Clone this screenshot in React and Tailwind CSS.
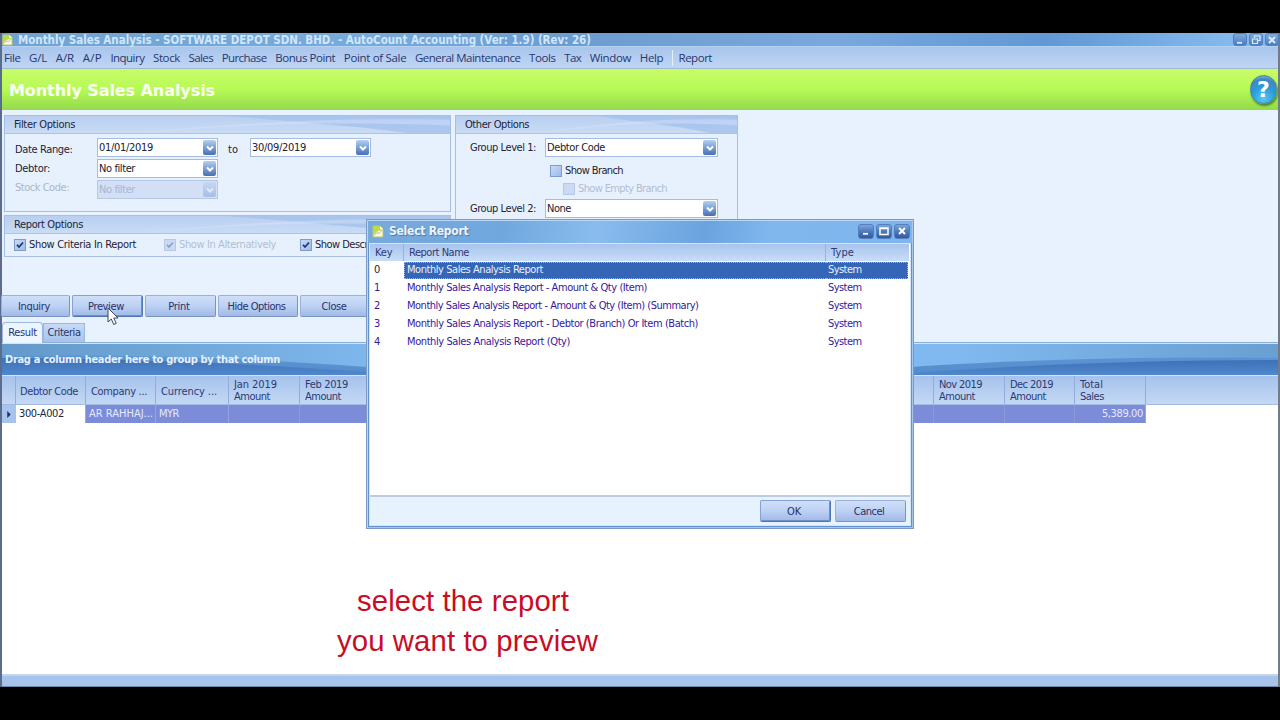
import { useLayoutEffect, useRef, useState } from "react";

// Single line of text whose tracking is adjusted so that it spans `w` pixels.
function Fit({ w, className = "", children }) {
  const ref = useRef(null);
  const [spacing, setSpacing] = useState(0);
  useLayoutEffect(() => {
    const natural = ref.current.getBoundingClientRect().width;
    setSpacing((w - natural) / String(children).length);
  }, []);
  return (
    <span className={`block shrink-0 whitespace-pre ${className}`}>
      <span ref={ref} className="inline-block align-top" style={{ letterSpacing: `${spacing}px` }}>
        {children}
      </span>
    </span>
  );
}

function DocIcon({ className }) {
  return (
    <svg viewBox="0 0 12 13" className={className}>
      <path d="M1 1h7l3 3v8H1z" fill="#f6f8ea" stroke="#b4c766" strokeWidth="1" />
      <path d="M1 1h7v3l3 1-5 1-5 4z" fill="#b8dc4e" />
      <path d="M2 10.500l3-3 2 1 3-3" stroke="#dba88b" strokeWidth="1" fill="none" />
      <path d="M8 1v3h3" fill="#fff" />
    </svg>
  );
}

function WinButton({ kind, dim }) {
  return (
    <span
      className={`flex items-center justify-center rounded-[3px] border ${
        dim
          ? "h-[13px] w-[14px] border-[#5280be] bg-linear-to-b from-[#7fabdf] to-[#4c7cc2]"
          : "h-[15px] w-[16px] border-[#5380bd] bg-linear-to-b from-[#7ba5dc] via-[#4d79bd] to-[#3159a1]"
      }`}
    >
      <svg viewBox="0 0 12 12" className="h-[12px] w-[12px] shrink-0" fill="none" stroke={dim ? "#dceafa" : "#fff"} strokeWidth="1.5">
        {kind === "min" && <path d="M3 8.800h5" strokeWidth="1.8" />}
        {kind === "max" && <path d="M2 3h8v6.500H2zM2 3.600h8" />}
        {kind === "restore" && <path d="M4.500 4V2h5.500v4.500H8M2.500 5h5v4.500h-5z" strokeWidth="1.2" />}
        {kind === "close" && <path d="M3 3l6 6M9 3l-6 6" strokeWidth="2" />}
      </svg>
    </span>
  );
}

const menu = [
  ["File", 16.500], ["G/L", 18], ["A/R", 18.500], ["A/P", 19], ["Inquiry", 34], ["Stock", 27], ["Sales", 24.500],
  ["Purchase", 45], ["Bonus Point", 60], ["Point of Sale", 62.500], ["General Maintenance", 105.500],
  ["Tools", 26.500], ["Tax", 17], ["Window", 41.500], ["Help", 23.500],
];

function GroupBox({ title, w, className, children }) {
  return (
    <section className={`flex shrink-0 flex-col border border-[#a9bfe2] bg-[#e7f1fd] ${className}`}>
      <header className="relative flex h-[18px] shrink-0 items-center border-b border-[#adc4e8] bg-linear-to-b from-[#b9cff0] to-[#c9dcf6] pl-[9px]">
        <svg viewBox="0 0 100 18" preserveAspectRatio="none" className="absolute inset-0 h-full w-full">
          <path d="M50 0H100V18H90C82 12 72 9 50 0z" fill="#a5c2ec" opacity=".8" />
          <path d="M30 18C55 8 75 6 100 10V4C75 2 55 6 30 18z" fill="#d6e5fa" opacity=".45" />
        </svg>
        <Fit w={w} className="relative pt-px">{title}</Fit>
      </header>
      {children}
    </section>
  );
}

function Combo({ text, w, className, disabled }) {
  return (
    <div
      className={`flex h-[19px] shrink-0 items-center justify-between border pr-px pl-px ${
        disabled ? "border-[#b5c8e7] bg-[#d2dff5] text-[#a4b6d7]" : "border-[#a5bce0] bg-white text-[#202030]"
      } ${className}`}
    >
      <Fit w={w} className="pt-px">{text}</Fit>
      <span
        className={`flex h-[15px] w-[13px] items-center justify-center rounded-[2px] ${
          disabled ? "bg-linear-to-b from-[#c8d8f2] to-[#a7bde4]" : "bg-linear-to-b from-[#b6cff2] via-[#7b9fd5] to-[#486fb2]"
        }`}
      >
        <svg viewBox="0 0 10 10" className="h-[10px] w-[10px]" fill="none" stroke={disabled ? "#dfe9f9" : "#fff"} strokeWidth="2">
          <path d="M2 3.500l3 3 3-3" />
        </svg>
      </span>
    </div>
  );
}

function Check({ label, w, checked, disabled, className = "" }) {
  return (
    <span className={`flex shrink-0 items-center gap-[3px] ${disabled ? "text-[#b0bdd6]" : "text-[#1f2333]"} ${className}`}>
      <span
        className={`flex h-[12px] w-[12px] items-center justify-center border ${
          disabled ? "border-[#b7c8e6] bg-[#cbd9f2]" : "border-[#7e9ccd] bg-linear-to-br from-[#c8daf6] to-[#9fbbe8]"
        }`}
      >
        {checked && (
          <svg viewBox="0 0 10 10" className="h-[10px] w-[10px]" fill="none" stroke={disabled ? "#8b9fd0" : "#20326f"} strokeWidth="1.7">
            <path d="M2 4.800l2 2.200 4-4.500" />
          </svg>
        )}
      </span>
      <Fit w={w}>{label}</Fit>
    </span>
  );
}

function PushButton({ label, w, className, strong }) {
  return (
    <span
      className={`flex h-[22px] shrink-0 items-center justify-center rounded-[2px] border bg-linear-to-b from-[#cfdff9] via-[#bdd1f3] to-[#a0b9e6] pt-[2px] pr-[3px] text-[#28316c] ${
        strong ? "border-[#86a2d2] border-r-[#4f75b6] border-b-[#4f75b6] shadow-[inset_-1px_-1px_0_#6d8fca]" : "border-[#9ab0d8] border-r-[#7993c2] border-b-[#7993c2]"
      } ${className}`}
    >
      <Fit w={w}>{label}</Fit>
    </span>
  );
}

const months = ["Jan", "Feb", "Mar", "Apr", "May", "Jun", "Jul", "Aug", "Sep", "Oct", "Nov", "Dec"];
const columns = "grid grid-cols-[14px_70px_70px_73px_71px_repeat(9,70.44px)_71px_70px_71px]";

const reports = [
  ["Monthly Sales Analysis Report", 136],
  ["Monthly Sales Analysis Report - Amount & Qty (Item)", 240],
  ["Monthly Sales Analysis Report - Amount & Qty (Item) (Summary)", 291.500],
  ["Monthly Sales Analysis Report - Debtor (Branch) Or Item (Batch)", 291],
  ["Monthly Sales Analysis Report (Qty)", 163],
];

function SelectReport() {
  return (
    <div className="absolute top-[219px] left-[366px] flex h-[310px] w-[548px] flex-col border border-[#7e99c2] bg-[#5f92cf] px-[2px] pb-[2px] shadow-[inset_1px_1px_0_#b9d6f5,inset_-1px_-1px_0_#a9c6ea]">
      <div className="mx-[-1px] mt-px flex h-[22px] shrink-0 items-center bg-[linear-gradient(100deg,#78a9da_0%,#70a8de_25%,#8abcee_42%,#6aa3df_62%,#80b8ee_74%,#7eb5ec_100%)] pr-[2px] pb-[2px] pl-[4px]">
        <DocIcon className="mr-[5px] h-[13px] w-[12px]" />
        <Fit w={79.500} className="text-[12px] font-bold text-[#eaf4ff] [text-shadow:1px_1px_1px_#55759f]">Select Report</Fit>
        <span className="ml-auto flex gap-[2px]">
          <WinButton kind="min" />
          <WinButton kind="max" />
          <WinButton kind="close" />
        </span>
      </div>
      <div className="flex min-h-0 flex-1 flex-col border border-[#d4e5f9] bg-white">
        <div className="mr-px grid h-[17px] shrink-0 grid-cols-[34px_422px_1fr] items-stretch bg-linear-to-b from-[#a9c4ec] to-[#c7dcf7] text-[#2c3a77]">
          <span className="flex items-center border-r border-[#98b2dc] pt-px pl-[5px]"><Fit w={17.500}>Key</Fit></span>
          <span className="flex items-center border-r border-[#98b2dc] pt-px pl-[5px]"><Fit w={60}>Report Name</Fit></span>
          <span className="flex items-center pt-px pl-[5px]"><Fit w={23}>Type</Fit></span>
        </div>
        {reports.map(([name, w], i) => (
          <div key={name} className={`mr-[2px] grid h-[18px] shrink-0 grid-cols-[34px_422px_1fr] items-center ${i === 0 ? "text-[#e8f0ff]" : "text-[#36189c]"}`}>
            <span className={`flex h-full items-center pb-px pl-[4px] ${i === 0 ? "text-[#252536]" : ""}`}>{i}</span>
            <span className={`flex items-center pb-px ${i === 0 ? "h-[17px] border-y border-l border-dotted border-[#9cb6e4] bg-[#3565b7] pl-[2px]" : "h-full pl-[3px]"}`}>
              <Fit w={w}>{name}</Fit>
            </span>
            <span className={`flex items-center pb-px pl-[2px] ${i === 0 ? "h-[17px] border-y border-r border-dotted border-[#9cb6e4] bg-[#3565b7]" : "h-full"}`}>
              <Fit w={33.500}>System</Fit>
            </span>
          </div>
        ))}
        <div className="mt-auto flex h-[30px] shrink-0 items-center justify-end gap-[4px] border-t-2 border-[#bccbdf] bg-[#e6f2fe] pr-[4px]">
          <PushButton label="OK" w={14} strong className="w-[71px]" />
          <PushButton label="Cancel" w={30.500} className="w-[71px]" />
        </div>
      </div>
    </div>
  );
}

export default function App() {
  return (
    <div className="relative flex h-[720px] w-[1280px] flex-col overflow-hidden bg-black py-[33px] font-['DejaVu_Sans_Condensed','DejaVu_Sans',sans-serif] text-[11px] leading-[12px] [font-stretch:condensed]">
      <div className="flex h-[654px] flex-col border-r-2 border-l-2 border-r-[#727b8a] border-l-[#5b6c8d] bg-white">
        <div className="flex h-[14px] shrink-0 items-center border-b border-[#b6d4f2] bg-[linear-gradient(90deg,#70a2d2_0%,#78aadb_28%,#6c9cd0_45%,#78a8dd_65%,#6298d4_82%,#83b9ec_96%)]">
          <DocIcon className="mr-[5px] h-[12px] w-[11px]" />
          <Fit w={573} className="text-[11.500px] font-bold text-[#cfe6fd]">Monthly Sales Analysis - SOFTWARE DEPOT SDN. BHD. - AutoCount Accounting (Ver: 1.9) (Rev: 26)</Fit>
          <span className="mr-[-1px] ml-auto flex gap-[2px]">
            <WinButton kind="min" dim />
            <WinButton kind="restore" dim />
            <WinButton kind="close" dim />
          </span>
        </div>
        <nav className="flex h-[22px] shrink-0 items-center gap-[8.600px] border-b border-[#9db9ce] bg-linear-to-b from-[#a9c5ec] to-[#bfd5f4] pl-[2px] font-['Open_Sans','Noto_Sans',sans-serif] text-[11.500px] text-[#28376f] [font-stretch:normal]">
          {menu.map(([label, w]) => (
            <Fit key={label} w={w}>{label}</Fit>
          ))}
          <span className="mr-[-3px] h-[16px] w-px bg-[#e4effc]" />
          <Fit w={33.500}>Report</Fit>
        </nav>
        <header className="flex h-[41px] shrink-0 items-center justify-between bg-linear-to-b from-[#c9fc68] via-[#b6fa56] to-[#94d94c] pl-[7px]">
          <Fit w={206} className="pt-[2px] font-['DejaVu_Sans',sans-serif] text-[16px] leading-[20px] font-bold text-[#fbfff0] [font-stretch:normal]">Monthly Sales Analysis</Fit>
          <span className="mr-px flex h-[29px] w-[27px] items-center justify-center rounded-full border border-[#4382a8] bg-[radial-gradient(circle_at_50%_85%,#55c9f2_0%,#2b9bdc_45%,#4287bf_75%,#a9d3ee_100%)] font-['DejaVu_Sans',sans-serif] text-[22px] leading-none font-bold text-white shadow-[1px_2px_2px_#4d8a2f] [font-stretch:normal]">?</span>
        </header>

        <div className="flex h-[207px] shrink-0 gap-[4px] bg-[#e7f2fe] pt-[5px] pl-[2px] text-[#20243a]">
          <div className="flex w-[447px] shrink-0 flex-col">
            <GroupBox title="Filter Options" w={61} className="mb-[3px] h-[97px]">
              <div className="grid grid-cols-[82px_122px_31px_121px] gap-y-[2px] pt-[4px] pl-[10px]">
                <Fit w={57.500} className="pt-[6px]">Date Range:</Fit>
                <Combo text="01/01/2019" w={54} className="w-[121px]" />
                <span className="pt-[6px] pl-[9px]">to</span>
                <Combo text="30/09/2019" w={54} className="w-[121px]" />
                <Fit w={35} className="pt-[4px]">Debtor:</Fit>
                <Combo text="No filter" w={36} className="col-span-3 w-[121px]" />
                <Fit w={54} className="pt-[2px] text-[#adb5c5]">Stock Code:</Fit>
                <Combo text="No filter" w={36} disabled className="col-span-3 w-[121px]" />
              </div>
            </GroupBox>
            <GroupBox title="Report Options" w={69} className="h-[42px]">
              <div className="flex flex-1 items-center overflow-hidden pb-px pl-[9px]">
                <Check label="Show Criteria In Report" w={107} checked className="w-[150px]" />
                <Check label="Show In Alternatively" w={97} checked disabled className="w-[136px]" />
                <Check label="Show Descr" w={53} checked />
              </div>
            </GroupBox>
            <div className="mt-[38px] ml-[-3px] flex gap-[2px]">
              <PushButton label="Inquiry" w={32} className="w-[69px]" />
              <PushButton label="Preview" w={36} strong className="w-[71px]" />
              <PushButton label="Print" w={21.500} className="w-[71px]" />
              <PushButton label="Hide Options" w={58} className="w-[80px]" />
              <PushButton label="Close" w={25} className="w-[71px]" />
            </div>
          </div>
          <GroupBox title="Other Options" w={64} className="h-[125px] w-[283px]">
            <div className="flex flex-col pl-[14px]">
              <div className="flex pt-[4px]">
                <Fit w={66} className="mr-[9px] w-[66px] pt-[4px]">Group Level 1:</Fit>
                <Combo text="Debtor Code" w={58} className="w-[173px]" />
              </div>
              <Check label="Show Branch" w={58} className="mt-[8px] ml-[80px]" />
              <Check label="Show Empty Branch" w={89} disabled className="mt-[6px] ml-[93px]" />
              <div className="flex pt-[4px]">
                <Fit w={66} className="mr-[9px] w-[66px] pt-[4px]">Group Level 2:</Fit>
                <Combo text="None" w={24} className="w-[173px]" />
              </div>
            </div>
          </GroupBox>
        </div>

        <div className="flex h-[26px] shrink-0 items-end border-b border-[#8dafd3] bg-[#e7f2fe] text-[#26346e]">
          <span className="mb-[-1px] flex h-[21px] w-[41px] items-center justify-center rounded-t-[4px] border border-b-0 border-[#9cb6dd] bg-[#edf5ff] pb-px"><Fit w={28.500}>Result</Fit></span>
          <span className="flex h-[19px] w-[42px] items-center justify-center border border-b-0 border-[#9cb6dd] bg-linear-to-b from-[#c6daf6] to-[#a7c2ec]"><Fit w={33}>Criteria</Fit></span>
        </div>

        <div className="relative flex h-[33px] shrink-0 items-center border-y border-[#cfe4f8] bg-linear-to-b from-[#609bd6] to-[#558ccc] pt-px pl-[3px]">
          <svg viewBox="0 0 1276 31" preserveAspectRatio="none" className="absolute inset-0 h-full w-full">
            <defs>
              <linearGradient id="sky" x1="0" x2="1" y1="0" y2="0">
                <stop offset="0" stopColor="#649aca" />
                <stop offset=".3" stopColor="#7fb8ee" />
                <stop offset=".75" stopColor="#7fb9ef" />
                <stop offset="1" stopColor="#6a9fd2" />
              </linearGradient>
              <linearGradient id="deep" x1="0" x2="0" y1="0" y2="1">
                <stop offset="0" stopColor="#3e71b8" />
                <stop offset="1" stopColor="#5088cb" />
              </linearGradient>
            </defs>
            <path d="M0 0H1276V14C1150 12 1010 16 910 23H365C250 14 130 10 0 12z" fill="url(#sky)" />
            <path d="M0 14C130 15 240 19 365 28V31H0z" fill="url(#deep)" />
            <path d="M1276 16C1150 16 1040 20 912 29V31H1276z" fill="url(#deep)" />
          </svg>
          <Fit w={275} className="relative text-[11px] font-bold text-[#e3f0fd]">Drag a column header here to group by that column</Fit>
        </div>
        <div className={`${columns} h-[29px] shrink-0 border-b border-[#a4bcdf] bg-linear-to-b from-[#a6c2eb] to-[#c3d8f5] text-[#2b3a76]`}>
          <span className="border-r border-[#93add8]" />
          <span className="flex items-center border-r border-[#93add8] pt-[3px] pl-[4px]"><Fit w={58}>Debtor Code</Fit></span>
          <span className="flex items-center border-r border-[#93add8] pt-[3px] pl-[5px]"><Fit w={56}>Company ...</Fit></span>
          <span className="flex items-center border-r border-[#93add8] pt-[3px] pl-[5px]"><Fit w={56}>Currency ...</Fit></span>
          {months.map((m) => (
            <span key={m} className="flex flex-col justify-center border-r border-[#93add8] pt-px pl-[5px]">
              <Fit w={43}>{`${m} 2019`}</Fit>
              <Fit w={36}>Amount</Fit>
            </span>
          ))}
          <span className="col-start-17 flex flex-col justify-center border-r border-[#93add8] pt-px pl-[5px]">
            <Fit w={23}>Total</Fit>
            <Fit w={24}>Sales</Fit>
          </span>
        </div>
        <div className={`${columns} h-[18px] shrink-0 text-[#e4eaff]`}>
          <span className="flex items-center justify-center bg-[#a9c4ec]">
            <svg viewBox="0 0 4 8" className="h-[7px] w-[4px]"><path d="M0 0l4 4-4 4z" fill="#20306c" /></svg>
          </span>
          <span className="flex items-center border-r border-[#93add8] pb-px pl-[3px] text-[#20243a]"><Fit w={45}>300-A002</Fit></span>
          <span className="flex items-center border-r border-[#98a3e0] bg-[#7d8cd8] pb-px pl-[3px]"><Fit w={64}>AR RAHHAJ...</Fit></span>
          <span className="flex items-center border-r border-[#98a3e0] bg-[#7d8cd8] pb-px pl-[3px]"><Fit w={20}>MYR</Fit></span>
          {months.map((m) => (
            <span key={m} className="border-r border-[#8e99d8] bg-[#7d8cd8]" />
          ))}
          <span className="col-start-17 flex items-center justify-end border-r border-[#98a3e0] bg-[#7d8cd8] pr-[2px] pb-px"><Fit w={41}>5,389.00</Fit></span>
        </div>
        <div className="flex flex-1 flex-col items-start pt-[158px] font-['Liberation_Sans',Arial,sans-serif] text-[29.300px] leading-[40px] text-[#c80d26] [font-stretch:normal]">
          <Fit w={212} className="ml-[355px]">select the report</Fit>
          <Fit w={261} className="ml-[335px]">you want to preview</Fit>
        </div>
        <footer className="h-[13px] shrink-0 border-t-2 border-b border-t-[#c3d5e6] border-b-[#7187aa] bg-[#a6c3ec]" />
      </div>

      <SelectReport />

      <svg viewBox="0 0 12 19" className="absolute top-[307px] left-[107px] h-[19px] w-[12px]">
        <path d="M1 1v14l3.300-3 2.400 5.500 2.500-1.100L6.800 11H11z" fill="#fff" stroke="#3c4666" strokeWidth="1" />
      </svg>
    </div>
  );
}
